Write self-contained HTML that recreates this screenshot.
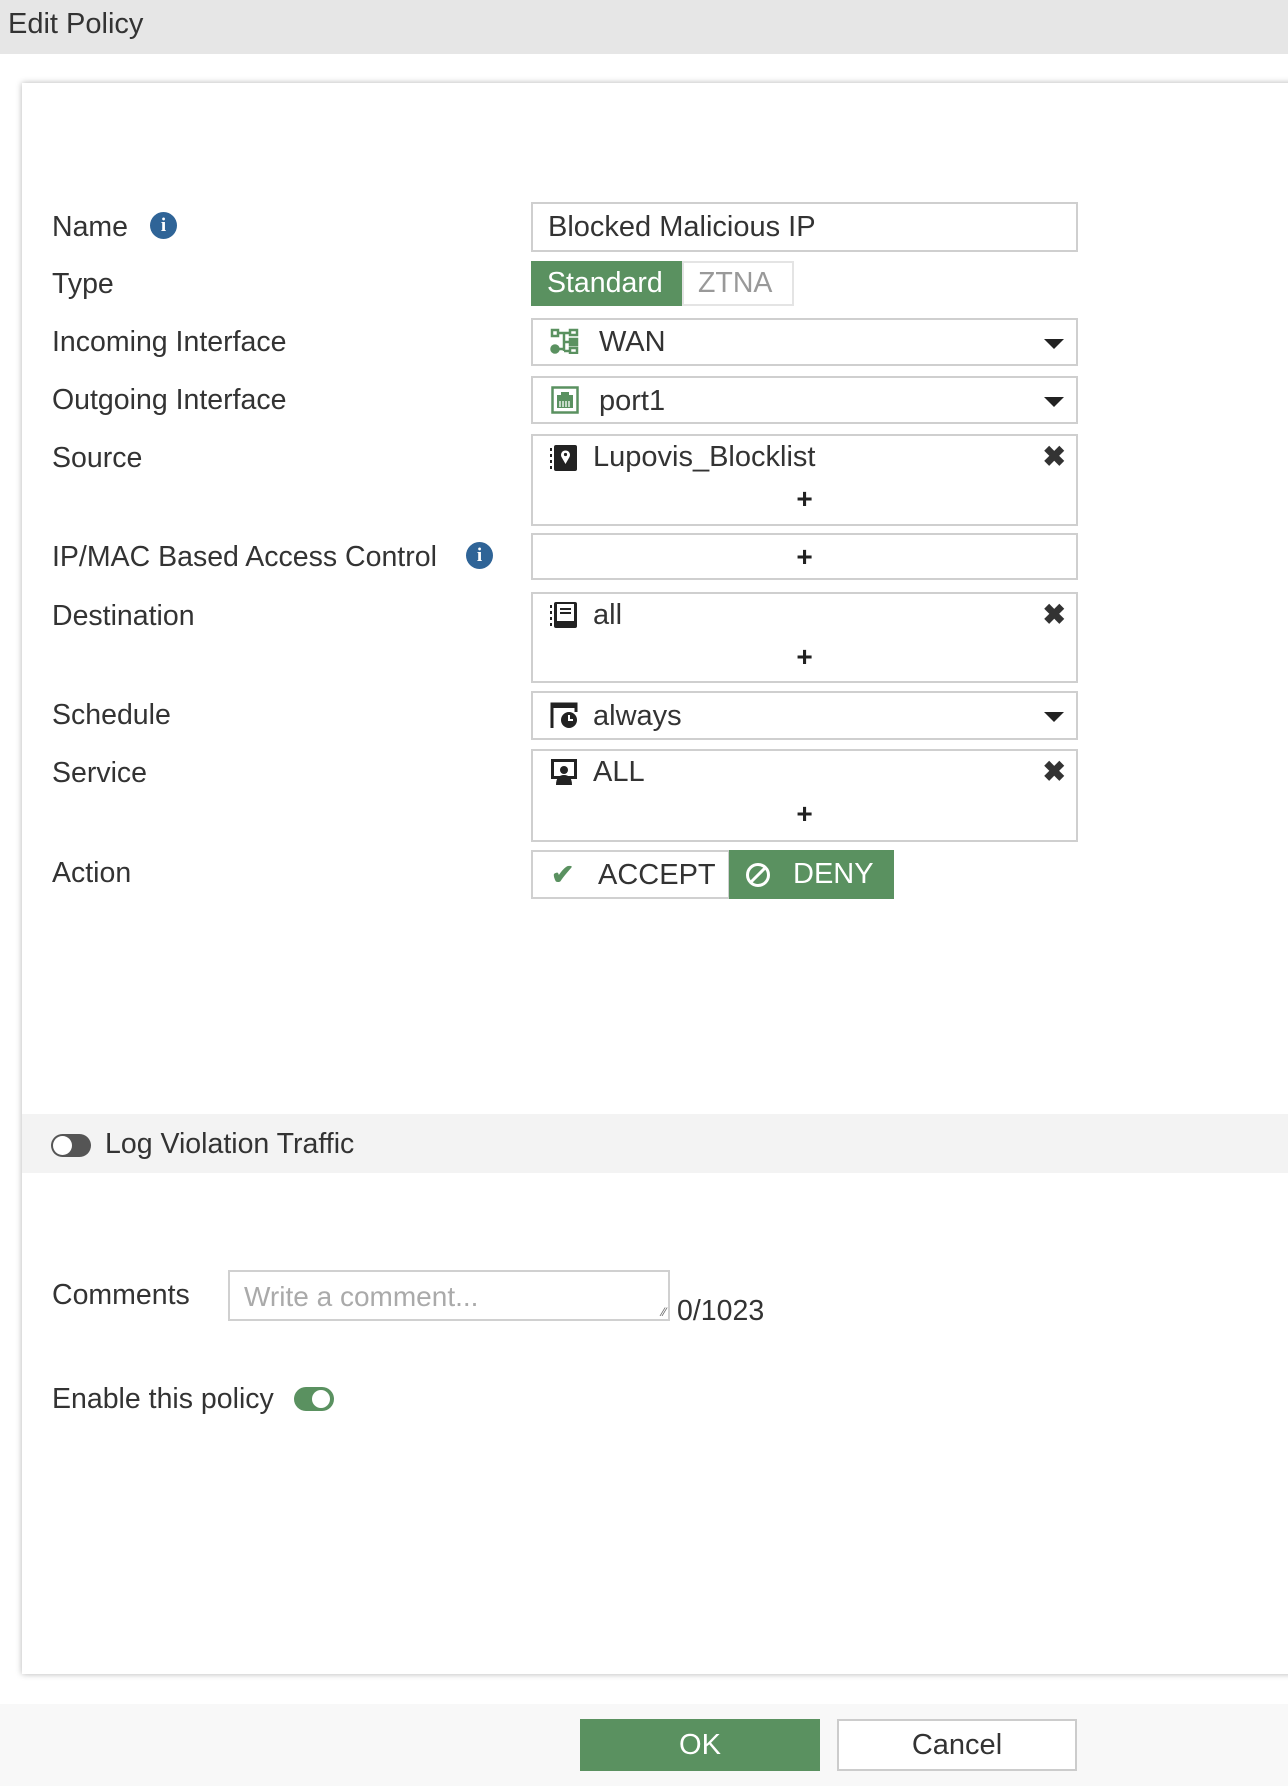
<!DOCTYPE html>
<html><head><meta charset="utf-8"><style>
*{box-sizing:border-box;margin:0;padding:0}
body{width:1288px;height:1786px;background:#fff;font-family:"Liberation Sans",sans-serif;color:#333;position:relative;overflow:hidden}
.a{position:absolute}
.hdr{left:0;top:0;width:1288px;height:54px;background:#e6e6e6}
.hdr span{position:absolute;left:8px;top:8px;font-size:29px;color:#333}
.panel{left:22px;top:83px;width:1300px;height:1591px;background:#fff;box-shadow:0 0 6px rgba(0,0,0,.3)}
.lbl{position:absolute;left:52px;font-size:28.5px;color:#333;line-height:30px}
.box{position:absolute;left:531px;width:547px;border:2px solid #cfcfcf;background:#fff}
.txt{position:absolute;font-size:29px;color:#333;line-height:30px}
.info{position:absolute;width:27px;height:27px;border-radius:50%;background:#2f6497;color:#fff;font:bold 19px "Liberation Serif",serif;text-align:center;line-height:27px}
.caret{position:absolute;right:12px;width:0;height:0;border-left:10px solid transparent;border-right:10px solid transparent;border-top:10px solid #222}
.x{position:absolute;right:10px;font-size:28px;font-weight:bold;color:#333;line-height:30px}
.plus{position:absolute;left:0;width:100%;text-align:center;font-size:28px;font-weight:bold;color:#222;line-height:30px}
.footer{left:0;top:1704px;width:1288px;height:82px;background:#f8f8f8}
</style></head><body>
<div class="a hdr"><span>Edit Policy</span></div>
<div class="a panel"></div>

<div class="lbl" style="top:212px">Name</div>
<div class="info" style="left:150px;top:212px">i</div>
<div class="box" style="top:202px;height:50px"><div class="txt" style="left:15px;top:8px">Blocked Malicious IP</div></div>

<div class="lbl" style="top:269px">Type</div>
<div class="a" style="left:531px;top:261px;width:151px;height:45px;background:#5a9160;color:#fff;font-size:28.5px;line-height:45px;padding-left:16px">Standard</div>
<div class="a" style="left:682px;top:261px;width:112px;height:45px;border:2px solid #e4e4e4;color:#999;font-size:28.5px;line-height:41px;padding-left:14px">ZTNA</div>

<div class="lbl" style="top:327px">Incoming Interface</div>
<div class="box" style="top:318px;height:48px">
<svg class="a" style="left:17px;top:8px" width="30" height="26" viewBox="0 0 30 26" fill="none" stroke="#5a9160" stroke-width="2.5"><rect x="2" y="2" width="6" height="6"/><circle cx="5" cy="21" r="3.5" fill="#5a9160"/><path d="M8 5h6M14 5v18M8 21h6M14 14h6M14 5h6M14 23h6"/><rect x="20" y="2" width="7" height="5"/><rect x="20" y="11" width="7" height="6" fill="#5a9160"/><rect x="20" y="20" width="7" height="5"/></svg>
<div class="txt" style="left:66px;top:7px">WAN</div><div class="caret" style="top:19px"></div></div>

<div class="lbl" style="top:385px">Outgoing Interface</div>
<div class="box" style="top:376px;height:48px">
<svg class="a" style="left:18px;top:8px" width="28" height="28" viewBox="0 0 28 28"><rect x="1.5" y="1.5" width="25" height="25" fill="none" stroke="#5a9160" stroke-width="2.5"/><path d="M6 9h4V6h8v3h4v13H6z" fill="#5a9160"/><path d="M9 15v6M12 15v6M15 15v6M18 15v6" stroke="#fff" stroke-width="1.3"/></svg>
<div class="txt" style="left:66px;top:8px">port1</div><div class="caret" style="top:19px"></div></div>

<div class="lbl" style="top:443px">Source</div>
<div class="box" style="top:434px;height:92px">
<svg class="a" style="left:17px;top:8px" width="28" height="28" viewBox="0 0 28 28"><rect x="4" y="1" width="23" height="26" rx="2" fill="#222"/><path d="M1 4v3M1 10v3M1 16v3M1 22v3" stroke="#222" stroke-width="2"/><path d="M15.5 20l-4-7a4.5 4.5 0 1 1 8 0z" fill="#fff"/><circle cx="15.5" cy="10.5" r="1.6" fill="#222"/></svg>
<div class="txt" style="left:60px;top:6px">Lupovis_Blocklist</div><div class="x" style="top:6px">✖</div><div class="plus" style="top:48px">+</div></div>

<div class="lbl" style="top:542px">IP/MAC Based Access Control</div>
<div class="info" style="left:466px;top:542px">i</div>
<div class="box" style="top:533px;height:47px"><div class="plus" style="top:7px">+</div></div>

<div class="lbl" style="top:601px">Destination</div>
<div class="box" style="top:592px;height:91px">
<svg class="a" style="left:17px;top:7px" width="28" height="28" viewBox="0 0 28 28"><rect x="4" y="1" width="23" height="26" rx="2" fill="#222"/><path d="M1 4v3M1 10v3M1 16v3M1 22v3" stroke="#222" stroke-width="2"/><rect x="7" y="3" width="17" height="17" fill="#fff"/><path d="M10 8h11M10 12h11" stroke="#222" stroke-width="2"/></svg>
<div class="txt" style="left:60px;top:6px">all</div><div class="x" style="top:6px">✖</div><div class="plus" style="top:48px">+</div></div>

<div class="lbl" style="top:700px">Schedule</div>
<div class="box" style="top:691px;height:49px">
<svg class="a" style="left:17px;top:8px" width="28" height="28" viewBox="0 0 28 28"><path d="M2 27V3h24v8" fill="none" stroke="#222" stroke-width="3"/><rect x="2" y="2" width="24" height="5" fill="#222"/><circle cx="19" cy="19" r="8" fill="#222"/><path d="M19 14v5h4" stroke="#fff" stroke-width="2" fill="none"/></svg>
<div class="txt" style="left:60px;top:8px">always</div><div class="caret" style="top:19px"></div></div>

<div class="lbl" style="top:758px">Service</div>
<div class="box" style="top:749px;height:93px">
<svg class="a" style="left:17px;top:7px" width="28" height="28" viewBox="0 0 28 28"><rect x="1" y="1" width="26" height="20" fill="#222"/><rect x="4" y="4" width="20" height="14" fill="#fff"/><circle cx="14" cy="12" r="4" fill="#222"/><path d="M6 27c0-7 3-10 8-10s8 3 8 10z" fill="#222"/></svg>
<div class="txt" style="left:60px;top:6px">ALL</div><div class="x" style="top:6px">✖</div><div class="plus" style="top:48px">+</div></div>

<div class="lbl" style="top:858px">Action</div>
<div class="a" style="left:531px;top:850px;width:199px;height:49px;border:2px solid #d0d0d0;background:#fff">
<div class="a" style="left:18px;top:6px;font-size:28px;color:#5a9160;font-weight:bold">✔</div>
<div class="txt" style="left:65px;top:8px">ACCEPT</div></div>
<div class="a" style="left:729px;top:850px;width:165px;height:49px;background:#5a9160">
<svg class="a" style="left:16px;top:12px" width="26" height="26" viewBox="0 0 26 26" fill="none" stroke="#fff" stroke-width="3"><circle cx="13" cy="13" r="10.5"/><path d="M6 20L20 6"/></svg>
<div class="txt" style="left:64px;top:9px;color:#fff">DENY</div></div>

<div class="a" style="left:22px;top:1114px;width:1266px;height:59px;background:#f3f3f3"></div>
<div class="a" style="left:51px;top:1134px;width:40px;height:23px;border-radius:12px;background:#555"></div>
<div class="a" style="left:53px;top:1136px;width:19px;height:19px;border-radius:50%;background:#fff"></div>
<div class="lbl" style="left:105px;top:1129px">Log Violation Traffic</div>

<div class="lbl" style="top:1280px">Comments</div>
<div class="a" style="left:228px;top:1270px;width:442px;height:51px;border:2px solid #d0d0d0"><div class="a" style="left:14px;top:9px;font-size:28px;color:#aaa">Write a comment...</div><div class="a" style="right:2px;bottom:0;font-size:12px;color:#666">⁄⁄</div></div>
<div class="a" style="left:677px;top:1295px;font-size:28.5px;color:#333">0/1023</div>

<div class="lbl" style="top:1384px">Enable this policy</div>
<div class="a" style="left:294px;top:1387px;width:40px;height:24px;border-radius:12px;background:#5a9160"></div>
<div class="a" style="left:312px;top:1390px;width:18px;height:18px;border-radius:50%;background:#fff"></div>

<div class="a footer"></div>
<div class="a" style="left:580px;top:1719px;width:240px;height:52px;background:#5a9160;color:#fff;font-size:29px;text-align:center;line-height:52px">OK</div>
<div class="a" style="left:837px;top:1719px;width:240px;height:52px;border:2px solid #ccc;background:#fff;color:#333;font-size:29px;text-align:center;line-height:48px">Cancel</div>
</body></html>
